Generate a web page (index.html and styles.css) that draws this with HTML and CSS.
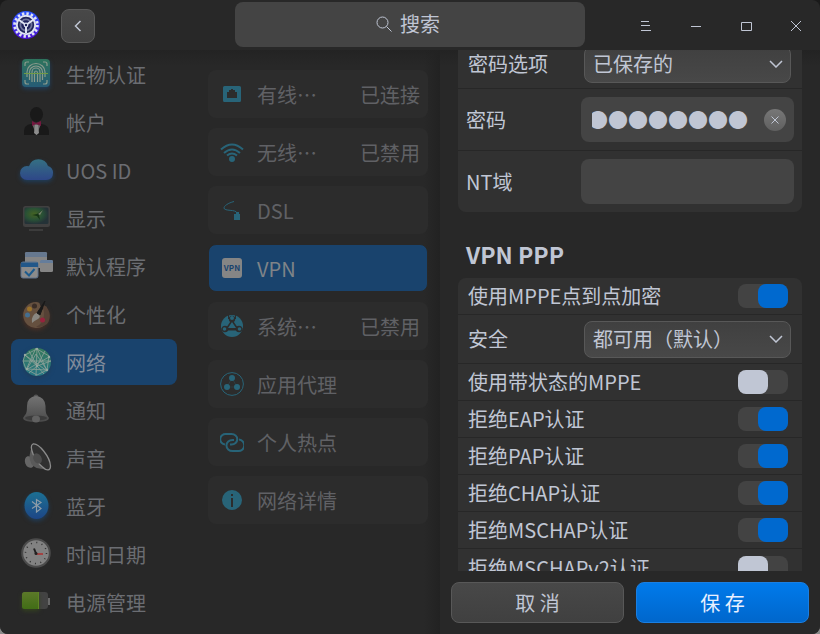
FILE: index.html
```
<!DOCTYPE html>
<html lang="zh-CN">
<head>
    <meta charset="UTF-8">
    <meta name="viewport" content="width=device-width, initial-scale=1.0">
    <title>控制中心 - 网络</title>
    <link rel="stylesheet" href="styles.css">
</head>
<body>

<div class="window">
    <header class="titlebar">
        <div class="titlebar-left">
            <svg class="logo" viewBox="0 0 28 28" aria-hidden="true">
                <defs>
                    <linearGradient id="logo-bg" x1="0" y1="0" x2="0" y2="1">
                        <stop offset="0" stop-color="#2a55ff"/>
                        <stop offset="1" stop-color="#4a0fd0"/>
                    </linearGradient>
                </defs>
                <circle cx="14" cy="14" r="14" fill="url(#logo-bg)"/>
                <circle cx="14" cy="14" r="11.4" fill="none" stroke="#dfe3f2" stroke-width="2.8" stroke-dasharray="2.4 2.08"/>
                <circle cx="14" cy="14" r="9.2" fill="#20245c" stroke="#dfe3f2" stroke-width="2"/>
                <circle cx="14" cy="14" r="5.6" fill="none" stroke="#6d7399" stroke-width="1.8"/>
                <path d="M14 14v8M14 14l-7-5M14 14l7-5" stroke="#dfe3f2" stroke-width="2"/>
                <circle cx="14" cy="14" r="2.4" fill="#dfe3f2"/>
                <circle cx="14" cy="14" r="1.2" fill="#20245c"/>
            </svg>
            <button class="back-button" aria-label="返回">
                <svg width="10" height="14" viewBox="0 0 10 14"><path d="M7.5 2L2.5 7l5 5"/></svg>
            </button>
        </div>
        <button class="search">
            <svg width="16" height="16" viewBox="0 0 16 16"><circle cx="6.5" cy="6.5" r="5.5"/><path d="M10.5 10.5l5 5"/></svg>
            搜索
        </button>
        <div class="window-buttons">
            <button aria-label="菜单"><svg width="12" height="12" viewBox="0 0 12 12"><path d="M1 1.5h8M1 5.5h9M1 10.5h10"/></svg></button>
            <button aria-label="最小化"><svg width="12" height="12" viewBox="0 0 12 12"><path d="M1 6.5h10"/></svg></button>
            <button aria-label="最大化"><svg width="12" height="12" viewBox="0 0 12 12"><path d="M1.5 2.5h10v8h-10z"/></svg></button>
            <button aria-label="关闭"><svg width="12" height="12" viewBox="0 0 12 12"><path d="M1 1l10 10M11 1L1 11"/></svg></button>
        </div>
    </header>

    <div class="content">
        <nav class="sidebar">
            <a href="#" class="nav-item">
                <svg class="nav-icon" viewBox="0 0 32 32">
                    <defs>
                        <linearGradient id="bio" x1="0" y1="0" x2="0" y2="1">
                            <stop offset="0" stop-color="#2e745c"/>
                            <stop offset="1" stop-color="#265b75"/>
                        </linearGradient>
                    </defs>
                    <rect class="glow-blue" x="2" y="1" width="28" height="28" rx="4" fill="url(#bio)"/>
                    <g fill="none" stroke="#8a9a8c" stroke-width="1.2">
                        <path d="M5 8V6q0-2 2-2h2M23 4h2q2 0 2 2v2M5 22v2q0 2 2 2h2M23 26h2q2 0 2-2v-2"/>
                        <path d="M7 19v-5a9 8.5 0 0 1 18 0v5M9.5 22v-8a6.5 6 0 0 1 13 0v8M12 24V14a4 4 0 0 1 8 0v10M14.500 24V15a1.500 2 0 0 1 3 0v9"/>
                    </g>
                    <path d="M4 15.500h24" stroke="#6f9a45" stroke-width="1"/>
                </svg>
                生物认证
            </a>
            <a href="#" class="nav-item">
                <svg class="nav-icon" viewBox="0 0 32 32">
                    <path d="M4 29v-4q0-6 7-7h10q8 1 8 7v4z" fill="#191919"/>
                    <path d="M12 18l4.500 11L21 18z" fill="#666"/>
                    <path d="M15 19h3l1 8-2.500 2-2.500-2z" fill="#8c8c8c"/>
                    <ellipse cx="16.500" cy="8.500" rx="6.500" ry="7.500" fill="#191919"/>
                    <path d="M12 15l4 2 5-2v5l-5-2-4 2z" fill="#73183f"/>
                </svg>
                帐户
            </a>
            <a href="#" class="nav-item">
                <svg class="nav-icon" viewBox="0 0 32 32">
                    <defs>
                        <linearGradient id="cloud" x1="0" y1="0" x2="0" y2="1">
                            <stop offset="0" stop-color="#357083"/>
                            <stop offset="1" stop-color="#2e4788"/>
                        </linearGradient>
                    </defs>
                    <path class="glow-blue" d="M7 26a7 7 0 0 1 0-14q1 0 2 .3a10 10 0 0 1 19-.3q5 1.500 5 7 0 7-7 7z" fill="url(#cloud)"/>
                </svg>
                UOS ID
            </a>
            <a href="#" class="nav-item">
                <svg class="nav-icon" viewBox="0 0 32 32">
                    <defs>
                        <radialGradient id="screen" cx=".4" cy=".4" r=".6">
                            <stop offset="0" stop-color="#456423"/>
                            <stop offset=".6" stop-color="#285036"/>
                            <stop offset="1" stop-color="#243237"/>
                        </radialGradient>
                    </defs>
                    <rect x="3" y="4" width="27" height="21" rx="2.500" fill="#404040"/>
                    <rect x="4.500" y="5.500" width="24" height="16.500" rx="1.500" fill="url(#screen)"/>
                    <path d="M12 13l5-1 6-4-4 5 1 5-3-4z" fill="#153415"/>
                    <path d="M18 12l5-4-3 5z" fill="#76826d"/>
                    <path d="M9 28h14" stroke="#3c3c3c" stroke-width="2"/>
                </svg>
                显示
            </a>
            <a href="#" class="nav-item">
                <svg class="nav-icon" viewBox="0 0 32 32">
                    <rect x="5" y="2" width="22" height="16" rx="1.500" fill="#858585"/>
                    <path d="M5 7V3.500Q5 2 6.500 2h19Q27 2 27 3.500V7z" fill="#66788f"/>
                    <rect x="20" y="10" width="13" height="12" rx="1.500" fill="#858585"/>
                    <path d="M20 13v-1.500q0-1.500 1.500-1.500h10q1.500 0 1.500 1.500V13z" fill="#657d9b"/>
                    <rect x="1" y="12" width="17" height="16" rx="2" fill="#8b8b8b" stroke="#5e738d" stroke-width="1"/>
                    <path d="M1 17v-4.500h17V17z" fill="#225789"/>
                    <path d="M5 21.500l4 4 5.500-6.500" fill="none" stroke="#1d5b8e" stroke-width="2"/>
                </svg>
                默认程序
            </a>
            <a href="#" class="nav-item">
                <svg class="nav-icon" viewBox="0 0 32 32">
                    <path class="glow-brown" d="M16 4A13 13 0 1 0 29 15l-3-7-4 4-2-5q0-3-4-3z" fill="#65503f"/>
                    <path d="M22 6a13 13 0 0 1 5 20Q22 30 16 29q12-6 6-23z" fill="#554135"/>
                    <circle cx="14.500" cy="8" r="2.500" fill="#3a2d27"/>
                    <circle cx="9.500" cy="11" r="2.500" fill="#9a722b"/>
                    <circle cx="7.500" cy="17" r="2.500" fill="#456f91"/>
                    <circle cx="22.500" cy="22" r="2.500" fill="#96233d"/>
                    <path d="M12 25q-1-4 1-7 3-5 6-2 2 3-1 5-4 2-6 4z" fill="#898781"/>
                    <path d="M17 15l3 2 5-14z" fill="#191919" stroke="#191919"/>
                </svg>
                个性化
            </a>
            <a href="#" class="nav-item active" aria-current="page">
                <svg class="nav-icon" viewBox="0 0 32 32">
                    <defs>
                        <linearGradient id="net" x1="0" y1="0" x2="0" y2="1">
                            <stop offset="0" stop-color="#34785b"/>
                            <stop offset="1" stop-color="#267684"/>
                        </linearGradient>
                    </defs>
                    <circle class="glow-blue" cx="17" cy="16" r="14" fill="url(#net)"/>
                    <path d="M3 15h28M5 9l12-6 12 7-2 14-10 5-11-6-3-8zM17 2l-1 28M16 2L6 24l23-13M17 2l10 23L5 9M5 9l12 11 14-5M7 23l20 1L16 8 7 23zM9 5l8 15 8-15M9 27l8-7 7 8" fill="none" stroke="#91a299" stroke-width=".8"/>
                    <g fill="#97a8a0">
                        <circle cx="17" cy="3" r="1.200"/><circle cx="17" cy="20" r="1.200"/><circle cx="5" cy="9" r="1.200"/>
                        <circle cx="29" cy="11" r="1.200"/><circle cx="7" cy="23" r="1.200"/><circle cx="27" cy="24" r="1.200"/>
                    </g>
                </svg>
                网络
            </a>
            <a href="#" class="nav-item">
                <svg class="nav-icon" viewBox="0 0 32 32">
                    <defs>
                        <linearGradient id="bell" x1="0" y1="0" x2="0" y2="1">
                            <stop offset="0" stop-color="#737373"/>
                            <stop offset="1" stop-color="#494949"/>
                        </linearGradient>
                    </defs>
                    <circle cx="16" cy="3" r="2.500" fill="#555"/>
                    <path d="M16 2q9 1 9.500 10 0 8 1.500 9l2 3q0 4-13 4T3 24l2-3q2-1 2-9Q7 3 16 2z" fill="url(#bell)"/>
                    <ellipse cx="16" cy="24" rx="11" ry="2.500" fill="#3b3b3b"/>
                    <ellipse cx="16" cy="25" rx="4" ry="3.500" fill="#616161"/>
                </svg>
                通知
            </a>
            <a href="#" class="nav-item">
                <svg class="nav-icon" viewBox="0 0 32 32">
                    <ellipse cx="9.500" cy="20" rx="4.500" ry="6" fill="#666" transform="rotate(-20 9.500 20)"/>
                    <path d="M13 3Q10 8 9.500 14q0 9 7 12l12 2z" fill="#5a5a5a"/>
                    <path d="M13 2c6-1 17 13 17.500 22 0 5-4 5-8 1C15 19 8 4 13 2z" fill="#303030" stroke="#8b8b8b" stroke-width="1.300"/>
                    <ellipse cx="17.500" cy="16.500" rx="4" ry="5.500" transform="rotate(-30 17.500 16.500)" fill="#4d4d4d"/>
                </svg>
                声音
            </a>
            <a href="#" class="nav-item">
                <svg class="nav-icon" viewBox="0 0 32 32">
                    <defs>
                        <linearGradient id="bt" x1="0" y1="0" x2="0" y2="1">
                            <stop offset="0" stop-color="#1c7093"/>
                            <stop offset="1" stop-color="#1d4686"/>
                        </linearGradient>
                    </defs>
                    <ellipse class="glow-blue" cx="16.500" cy="15.500" rx="12" ry="13.500" fill="url(#bt)"/>
                    <path d="M12 11.500l9 7-4.500 3.500V9.500L21 12.500l-9 6" fill="none" stroke="#8d9ca8" stroke-width="1.200"/>
                </svg>
                蓝牙
            </a>
            <a href="#" class="nav-item">
                <svg class="nav-icon" viewBox="0 0 32 32">
                    <circle cx="16" cy="15" r="13.800" fill="#828282" stroke="#4b4b4b" stroke-width="2"/>
                    <circle cx="16" cy="15" r="10.500" fill="none" stroke="#303030" stroke-width="1.500" stroke-dasharray="1 4.498"/>
                    <path d="M16 15.500l-2-5" stroke="#222" stroke-width="2"/>
                    <path d="M16 16h7" stroke="#a24343" stroke-width="2"/>
                    <circle cx="16" cy="15.500" r="1.500" fill="#222"/>
                </svg>
                时间日期
            </a>
            <a href="#" class="nav-item">
                <svg class="nav-icon" viewBox="0 0 32 32">
                    <defs>
                        <linearGradient id="power" x1="0" y1="0" x2="0" y2="1">
                            <stop offset="0" stop-color="#5c7929"/>
                            <stop offset="1" stop-color="#416d16"/>
                        </linearGradient>
                    </defs>
                    <rect x="28" y="12" width="2" height="7" fill="#696969"/>
                    <rect x="2" y="6" width="26" height="17" rx="3" fill="#434343"/>
                    <path class="glow-green" d="M4.500 6H19v17H4.500Q2 23 2 20.500v-12Q2 6 4.500 6z" fill="url(#power)"/>
                    <path d="M18.500 6v17" stroke="#5f8524"/>
                </svg>
                电源管理
            </a>
        </nav>

        <nav class="network-list">
            <a href="#" class="network-item">
                <svg viewBox="0 0 24 24">
                    <path d="M4.500 4h15q1.500 0 1.500 1.500v13q0 1.500-1.500 1.500h-15Q3 20 3 18.500v-13Q3 4 4.500 4zM7 16h10v-6h-2V8h-2V7h-2v1H9v2H7z" fill-rule="evenodd"/>
                </svg>
                <span class="name">有线…</span>
                <span>已连接</span>
            </a>
            <a href="#" class="network-item">
                <svg viewBox="0 0 24 24">
                    <g class="line" stroke-width="2"><path d="M1 9.500q11-10 22 0M4 13q8-7 16 0M7 15.500q5-4 10 0"/></g>
                    <circle cx="12" cy="19" r="3"/>
                </svg>
                <span class="name">无线…</span>
                <span>已禁用</span>
            </a>
            <a href="#" class="network-item">
                <svg viewBox="0 0 24 24">
                    <path class="line" d="M14 3.500C8 5 4 8 4 10c0 3.500 12 1 13 5"/>
                    <path d="M14 16h2v-2h3v2h1v6h-6z"/>
                </svg>
                <span class="name">DSL</span>
            </a>
            <a href="#" class="network-item active" aria-current="page">
                <svg viewBox="0 0 24 24">
                    <rect x="2" y="2" width="20" height="20" rx="3"/>
                    <text x="12" y="15" class="vpn-mark">VPN</text>
                </svg>
                <span class="name">VPN</span>
            </a>
            <a href="#" class="network-item">
                <svg viewBox="0 0 24 24">
                    <circle cx="12" cy="12" r="11"/>
                    <g class="cut">
                        <path d="M11.500 6L5 15.500v1h14v-1L12.500 6z"/>
                        <circle cx="12" cy="5" r="3.200"/><circle cx="5" cy="15" r="3.200"/><circle cx="19" cy="15" r="3.200"/>
                        <path d="M1 14.500h5v1H1zM18 14.500h5v1h-5zM8 1h1v4H8zM15 1h1v4h-1z"/>
                    </g>
                    <path d="M12 8l4 6H8zM8 17h8v2H8z"/>
                    <circle cx="12" cy="4" r="2"/><circle cx="4.500" cy="15" r="1.800"/><circle cx="19.500" cy="15" r="1.800"/>
                </svg>
                <span class="name">系统…</span>
                <span>已禁用</span>
            </a>
            <a href="#" class="network-item">
                <svg viewBox="0 0 24 24">
                    <circle class="line" cx="12" cy="12" r="11.400"/>
                    <path class="line thin" d="M12 6L7 15h10z"/>
                    <circle cx="12" cy="6" r="3"/><circle cx="7" cy="15" r="3"/><circle cx="17" cy="15" r="3"/>
                </svg>
                <span class="name">应用代理</span>
            </a>
            <a href="#" class="network-item">
                <svg viewBox="0 0 24 24">
                    <g class="line" stroke-width="2"><path d="M5 14.500A5 5 0 0 1 6 4h5.500a5.500 5 0 0 1 0 10.500H10"/><path d="M19 9.500A5 5 0 0 1 18 21h-5.500a5.500 5 0 0 1 0-11H14"/></g>
                </svg>
                <span class="name">个人热点</span>
            </a>
            <a href="#" class="network-item">
                <svg viewBox="0 0 24 24">
                    <circle cx="12" cy="12" r="10"/>
                    <path class="cut" d="M11 10h2v9h-2zM11 6h2v2h-2z"/>
                </svg>
                <span class="name">网络详情</span>
            </a>
        </nav>

        <form class="details">
            <div class="details-scroll">
                <div class="card">
                    <div class="row row-select">
                        <label for="pwd-option">密码选项</label>
                        <div class="select">
                            <select id="pwd-option"><option>已保存的</option></select>
                            <svg width="14" height="8" viewBox="0 0 14 8"><path d="M1 1l6 6 6-6"/></svg>
                        </div>
                    </div>
                    <div class="row row-input">
                        <label for="pwd">密码</label>
                        <div class="field">
                            <input class="secret" type="text" id="pwd" value="●●●●●●●●" autocomplete="off">
                            <button type="button" class="clear-button" aria-label="清除">
                                <svg width="8" height="8" viewBox="0 0 8 8"><path d="M.5.5l7 7M7.500.5l-7 7"/></svg>
                            </button>
                        </div>
                    </div>
                    <div class="row row-input">
                        <label for="nt-domain">NT域</label>
                        <div class="field"><input type="text" id="nt-domain"></div>
                    </div>
                </div>

                <h2>VPN PPP</h2>
                <div class="card">
                    <div class="row">
                        <label for="mppe">使用MPPE点到点加密</label>
                        <input type="checkbox" class="switch" id="mppe" checked>
                    </div>
                    <div class="row row-select">
                        <label for="security">安全</label>
                        <div class="select">
                            <select id="security"><option>都可用（默认）</option></select>
                            <svg width="14" height="8" viewBox="0 0 14 8"><path d="M1 1l6 6 6-6"/></svg>
                        </div>
                    </div>
                    <div class="row">
                        <label for="stateful">使用带状态的MPPE</label>
                        <input type="checkbox" class="switch" id="stateful">
                    </div>
                    <div class="row">
                        <label for="eap">拒绝EAP认证</label>
                        <input type="checkbox" class="switch" id="eap" checked>
                    </div>
                    <div class="row">
                        <label for="pap">拒绝PAP认证</label>
                        <input type="checkbox" class="switch" id="pap" checked>
                    </div>
                    <div class="row">
                        <label for="chap">拒绝CHAP认证</label>
                        <input type="checkbox" class="switch" id="chap" checked>
                    </div>
                    <div class="row">
                        <label for="mschap">拒绝MSCHAP认证</label>
                        <input type="checkbox" class="switch" id="mschap" checked>
                    </div>
                    <div class="row">
                        <label for="mschapv2">拒绝MSCHAPv2认证</label>
                        <input type="checkbox" class="switch" id="mschapv2">
                    </div>
                </div>
            </div>
            <div class="actions">
                <button type="button">取 消</button>
                <button type="submit" class="primary">保 存</button>
            </div>
        </form>
    </div>
</div>

</body>
</html>
```

FILE: styles.css
```
* {
    box-sizing: border-box;
}
body {
    margin: 0;
    background: linear-gradient(#1a1a1a 50%, #8a8a8a 50%);
    font-family: "Noto Sans CJK SC", sans-serif;
    font-size: 20px;
    line-height: 28px;
    color: #c0c6d4;
}
button, input, select {
    font: inherit;
    color: inherit;
    margin: 0;
    padding: 0;
    border: none;
    background: none;
}
a {
    color: inherit;
    text-decoration: none;
}
.window {
    display: flex;
    flex-direction: column;
    height: 100vh;
    background: #282828;
    border-radius: 8px;
    overflow: hidden;
}

/* title bar */
.titlebar {
    display: grid;
    grid-template-columns: 1fr 350px 1fr;
    flex: none;
    height: 50px;
}
.titlebar svg {
    fill: none;
    stroke: #c0c6d4;
}
.titlebar-left {
    display: flex;
    align-items: center;
    gap: 21px;
    padding-left: 12px;
}
.titlebar .logo {
    width: 28px;
    height: 28px;
    stroke: none;
}
.back-button {
    display: grid;
    place-items: center;
    width: 34px;
    height: 34px;
    margin-top: 2px;
    border: 1px solid #585858;
    border-radius: 8px;
    background: linear-gradient(#484848, #414141);
}
.back-button svg {
    stroke-width: 1.5;
}
.search {
    display: flex;
    align-items: center;
    justify-content: center;
    gap: 8px;
    margin: 2px 0 3px;
    padding: 0 4px 2px 0;
    border-radius: 8px;
    background: #444;
}
.window-buttons {
    display: flex;
    justify-content: flex-end;
}
.window-buttons button {
    display: grid;
    place-items: center;
    width: 50px;
    padding: 2px 0 0 2px;
}

/* columns */
.content {
    display: flex;
    flex: 1;
    min-height: 0;
    background: linear-gradient(#232323, #282828 16px);
}
.sidebar {
    display: flex;
    flex-direction: column;
    gap: 2px;
    flex: none;
    width: 188px;
    padding: 1px 11px;
    overflow: hidden;
    color: #6b6d72;
}
.nav-item {
    display: flex;
    align-items: center;
    gap: 14px;
    flex: none;
    height: 46px;
    padding: 2px 0 0 9px;
    border-radius: 8px;
}
.nav-item.active {
    background: #19436d;
    color: #818c9b;
}
.nav-icon {
    flex: none;
    width: 32px;
    height: 32px;
    margin-top: -2px;
    overflow: visible;
}
.glow-blue {
    filter: drop-shadow(0 2px 2px #1f3d5a);
}
.glow-brown {
    filter: drop-shadow(0 2px 2px #4a3026);
}
.glow-green {
    filter: drop-shadow(0 2px 2px #34421f);
}
.network-list {
    display: flex;
    flex-direction: column;
    gap: 10px;
    flex: 1;
    min-width: 0;
    padding: 20px 12px 20px 20px;
    overflow: hidden;
    color: #606165;
    background: linear-gradient(to left, #222, transparent 16px);
}
.network-item {
    display: flex;
    align-items: center;
    gap: 13px;
    flex: none;
    height: 48px;
    padding: 2px 8px 0 12px;
    border-radius: 8px;
    background: #2c2c2c;
}
.network-item.active {
    border: 1px solid #282828;
    padding: 2px 7px 0 11px;
    background: #19436d;
    color: #7f8388;
}
.network-item .name {
    flex: 1;
}
.network-item svg {
    flex: none;
    width: 24px;
    height: 24px;
    margin-top: -2px;
    fill: #286478;
}
.network-item.active svg {
    fill: #858585;
}
.network-item .line {
    fill: none;
    stroke: #286478;
}
.network-item .thin {
    stroke-width: 0.3;
}
.network-item .cut {
    fill: #2c2c2c;
}
.network-item .vpn-mark {
    fill: #19436d;
    font-size: 8px;
    font-weight: bold;
    text-anchor: middle;
}

/* connection details */
.details {
    display: flex;
    flex-direction: column;
    flex: none;
    width: 380px;
}
.details-scroll {
    flex: 1;
    min-height: 0;
    padding: 0 18px;
    overflow: hidden;
}
.card {
    border-radius: 8px;
    background: #313131;
}
/* list is scrolled a little under the title bar */
.card:first-child {
    margin-top: -10px;
}
.row {
    display: flex;
    align-items: center;
    justify-content: space-between;
    height: 37px;
    padding: 0 14px 0 10px;
    border-bottom: 1px solid #272727;
}
.row-select {
    height: 49px;
    padding-right: 11px;
}
.row-input {
    height: 62px;
    padding: 0 8px;
}
.row:last-child {
    border-bottom: none;
}
.row-input:last-child {
    height: 61px;
}
h2 {
    margin: 28px 8px 10px;
    font-size: 23px;
    line-height: 28px;
    font-weight: bold;
}
.select {
    display: grid;
    align-items: center;
    width: 207px;
}
.select select, .select svg {
    grid-area: 1 / 1;
}
.select select {
    appearance: none;
    height: 37px;
    padding: 0 30px 0 8px;
    border: 1px solid #585858;
    border-radius: 8px;
    background: linear-gradient(#404040, #484848);
}
.select svg {
    justify-self: end;
    margin-right: 8px;
    fill: none;
    stroke: #c0c6d4;
    stroke-width: 1.5;
    pointer-events: none;
}
.field {
    display: flex;
    align-items: center;
    gap: 16px;
    width: 213px;
    height: 45px;
    padding: 0 8px 0 11px;
    border-radius: 8px;
    background: #444;
}
.field input {
    flex: 1;
    min-width: 0;
    outline: none;
}
.field .secret {
    text-indent: -4px;
}
.clear-button {
    display: grid;
    place-items: center;
    flex: none;
    width: 22px;
    height: 22px;
    border-radius: 50%;
    background: linear-gradient(#777, #606060);
}
.clear-button svg {
    stroke: #c0c6d4;
}
.switch {
    appearance: none;
    width: 50px;
    height: 24px;
    border-radius: 8px;
    background: #434343;
}
.switch::before {
    content: "";
    display: block;
    width: 30px;
    height: 24px;
    border-radius: 8px;
    background: #c0c6d4;
}
.switch:checked::before {
    margin-left: auto;
    background: #0069cf;
}
.actions {
    display: flex;
    gap: 12px;
    padding: 11px;
}
.actions button {
    flex: 1;
    height: 41px;
    border: 1px solid #585858;
    border-radius: 8px;
    background: linear-gradient(#484848, #404040);
}
.actions .primary {
    border-color: #1a7fe2;
    background: linear-gradient(#007aeb, #0067cc);
    color: #e8f0ff;
}
```
